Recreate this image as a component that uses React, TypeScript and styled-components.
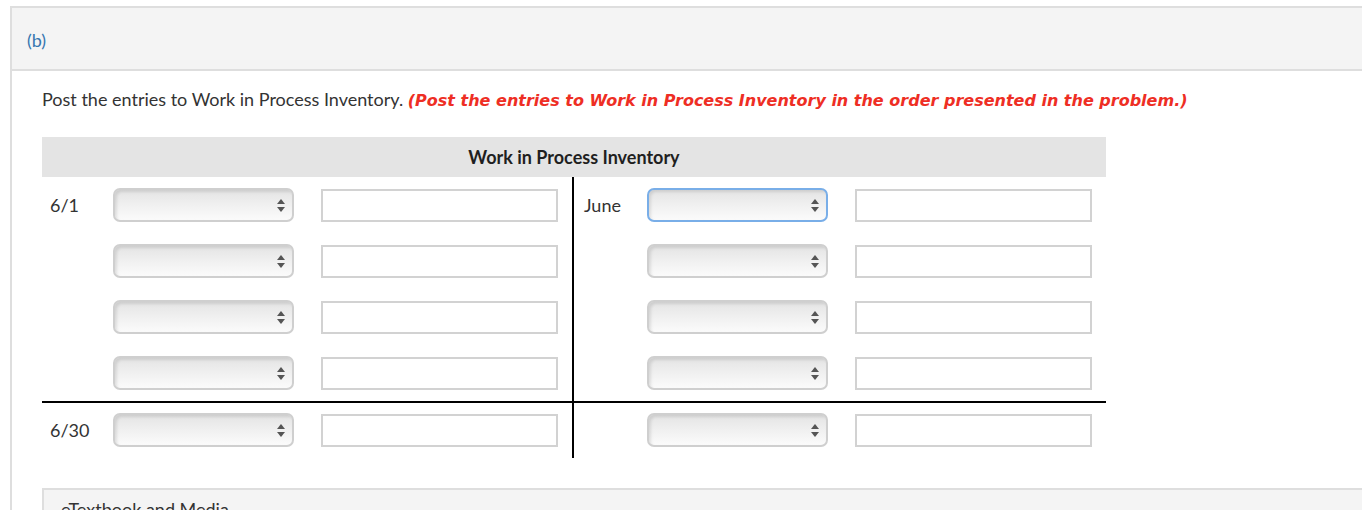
import styled, { createGlobalStyle } from "styled-components";

const GlobalStyle = createGlobalStyle`
  body {
    margin: 0;
    background: #fff;
    font-family: Lato, "Open Sans", sans-serif;
    color: #333;
    overflow: hidden;
  }
`;

const Page = styled.div`
  width: 1400px;
  padding: 6px 0 0 10px;
`;

const Panel = styled.section`
  border: 2px solid #dedede;
  border-right: none;
`;

const PanelHeader = styled.div`
  height: 63px;
  display: flex;
  align-items: center;
  padding: 2px 0 0 15px;
  background: #f4f4f4;
  border-bottom: 2px solid #dedede;
  color: #3677b0;
  font-size: 18px;
  box-sizing: border-box;
`;

const PanelBody = styled.div`
  padding: 16px 0 30px 30px;
`;

const Instructions = styled.p`
  margin: 0 0 24px;
  font-size: 18px;
  line-height: 24px;
  color: #333;
`;

const Emphasis = styled.em`
  color: #ee2e24;
  font-family: "DejaVu Sans", Verdana, sans-serif;
  font-weight: bold;
  font-size: 16px;
`;

const TAccount = styled.div`
  width: 1064px;
  display: grid;
  grid-template-columns: 530px 534px;
`;

const AccountTitle = styled.div`
  grid-column: 1 / -1;
  height: 40px;
  background: #e4e4e4;
  display: flex;
  align-items: center;
  justify-content: center;
  font-weight: bold;
  font-size: 18px;
  color: #1f1f1f;
`;

const Side = styled.div<{ $right?: boolean; $total?: boolean }>`
  display: flex;
  flex-direction: column;
  gap: 22px;
  padding: ${({ $total }) => ($total ? "10px 0 11px" : "11px 0")};
  padding-left: ${({ $right }) => ($right ? "10px" : "8px")};
  border-left: ${({ $right }) => ($right ? "2px solid #000" : "none")};
  border-top: ${({ $total }) => ($total ? "2px solid #000" : "none")};
`;

const Row = styled.div`
  display: grid;
  grid-template-columns: 36px 181px 237px;
  column-gap: 27px;
  align-items: center;
  height: 34px;
`;

const DateLabel = styled.span`
  font-size: 18px;
  color: #333;
  white-space: nowrap;
`;

const SelectWrap = styled.div`
  position: relative;
  height: 34px;
`;

const Select = styled.select<{ $focused?: boolean }>`
  appearance: none;
  width: 100%;
  height: 100%;
  box-sizing: border-box;
  border: 2px solid ${({ $focused }) => ($focused ? "#79aee8" : "#cfcfcf")};
  border-radius: 7px;
  background: linear-gradient(#e4e4e4, #f0f0f0 50%, #fbfbfb);
  box-shadow: inset 2px 2px 3px rgba(0, 0, 0, 0.1);
  outline: none;
`;

const Arrows = styled.svg`
  position: absolute;
  right: 9px;
  top: 11px;
  pointer-events: none;
`;

const Amount = styled.input`
  height: 33px;
  box-sizing: border-box;
  border: 2px solid #d2d2d2;
  background: #fff;
  outline: none;
  margin-top: 1px;
`;

const SubPanel = styled.div`
  margin-top: 30px;
  border: 2px solid #dedede;
  border-right: none;
  background: #f4f4f4;
  padding: 8px 0 10px 17px;
  font-size: 18px;
  color: #333;
`;

const Picker = ({ focused }: { focused?: boolean }) => (
  <SelectWrap>
    <Select $focused={focused} defaultValue="">
      <option value=""></option>
    </Select>
    <Arrows width="8" height="13" viewBox="0 0 8 13">
      <path d="M4 0 L8 5 H0 Z" fill="#555" />
      <path d="M0 8 H8 L4 13 Z" fill="#555" />
    </Arrows>
  </SelectWrap>
);

const Entry = ({ label, focused }: { label?: string; focused?: boolean }) => (
  <Row>
    <DateLabel>{label}</DateLabel>
    <Picker focused={focused} />
    <Amount type="text" />
  </Row>
);

const App = () => (
  <Page>
    <GlobalStyle />
    <Panel>
      <PanelHeader>(b)</PanelHeader>
      <PanelBody>
        <Instructions>
          Post the entries to Work in Process Inventory.{" "}
          <Emphasis>(Post the entries to Work in Process Inventory in the order presented in the problem.)</Emphasis>
        </Instructions>
        <TAccount>
          <AccountTitle>Work in Process Inventory</AccountTitle>
          <Side>
            <Entry label="6/1" />
            <Entry />
            <Entry />
            <Entry />
          </Side>
          <Side $right>
            <Entry label="June" focused />
            <Entry />
            <Entry />
            <Entry />
          </Side>
          <Side $total>
            <Entry label="6/30" />
          </Side>
          <Side $total $right>
            <Entry />
          </Side>
        </TAccount>
        <SubPanel>eTextbook and Media</SubPanel>
      </PanelBody>
    </Panel>
  </Page>
);

export default App;
